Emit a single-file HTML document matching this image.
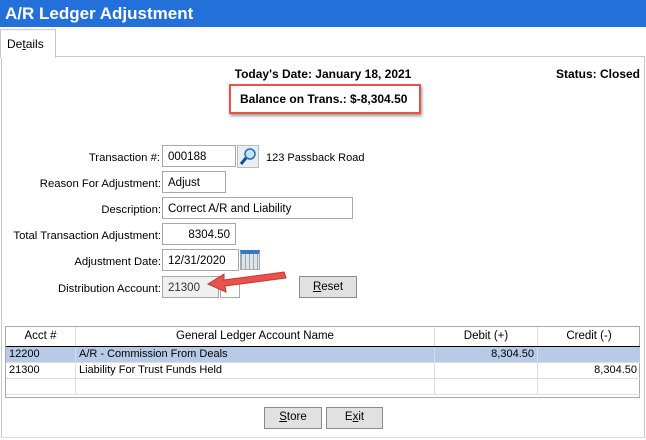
<html><head><style>
body{margin:0;width:646px;height:440px;background:#fff;font-family:"Liberation Sans",Arial,sans-serif;font-size:11px;color:#000;position:relative;overflow:hidden}
.a{position:absolute}
.in{position:absolute;border:1px solid #a8a8a8;background:#fff;box-sizing:border-box;padding:4px 5px;font-size:11.5px;height:22px;line-height:14px}
.lb{position:absolute;text-align:right;right:485px;font-size:11.3px}
.btn{position:absolute;border:1px solid #8a8a8a;background:#e1e1e1;box-sizing:border-box;text-align:center;font-size:11.5px;line-height:19px}
td{font-size:11px;padding:0 3px;height:16px;border-right:1px solid #ddd;border-bottom:1px solid #ddd}
</style></head><body>
<div class="a" style="left:0;top:0;width:646px;height:27px;background:#2370db"></div>
<div class="a" style="left:5px;top:4px;color:#fff;font-weight:bold;font-size:17px">A/R Ledger Adjustment</div>
<div class="a" style="left:1px;top:56px;width:642px;height:380px;border:1px solid #c8c8c8;border-bottom-color:#ddd"></div>
<div class="a" style="left:0;top:29px;width:54px;height:28px;border:1px solid #c8c8c8;border-bottom:none;background:#fff"></div>
<div class="a" style="left:7px;top:37px;font-size:12px">De<u>t</u>ails</div>
<div class="a" style="left:0;top:67px;width:646px;text-align:center;font-weight:bold;font-size:12px">Today's Date: January 18, 2021</div>
<div class="a" style="right:6px;top:67px;font-weight:bold;font-size:12px">Status: Closed</div>
<div class="a" style="left:229px;top:84px;width:188px;height:26px;border:2px solid #e8524a;box-shadow:1px 2px 3px rgba(0,0,0,.4)"></div>
<div class="a" style="left:240px;top:92px;font-weight:bold;font-size:12px">Balance on Trans.: $-8,304.50</div>
<div class="lb" style="top:152px;right:486px">Transaction #:</div>
<div class="in" style="left:162px;top:145px;width:74px">000188</div>
<div class="a" style="left:237px;top:145px;width:20px;height:21px;border:1px solid #bbb;background:#e8eef5"><svg width="20" height="21"><circle cx="12" cy="8" r="5" fill="#bfe4f8" stroke="#2a6ab5" stroke-width="1.5"/><line x1="8" y1="12" x2="3" y2="18" stroke="#1a4a90" stroke-width="3"/></svg></div>
<div class="a" style="left:266px;top:152px">123 Passback Road</div>
<div class="lb" style="top:178px">Reason For Adjustment:</div>
<div class="in" style="left:162px;top:171px;width:64px">Adjust</div>
<div class="lb" style="top:204px">Description:</div>
<div class="in" style="left:162px;top:197px;width:191px">Correct A/R and Liability</div>
<div class="lb" style="top:230px">Total Transaction Adjustment:</div>
<div class="in" style="left:162px;top:223px;width:74px;text-align:right">8304.50</div>
<div class="lb" style="top:256px">Adjustment Date:</div>
<div class="in" style="left:162px;top:249px;width:77px">12/31/2020</div>
<div class="a" style="left:240px;top:250px;width:20px;height:20px;background:repeating-linear-gradient(90deg,#9ab 0 1px,#dde4ea 1px 4px);border:1px solid #aaa;border-top:4px solid #3c78c0;box-sizing:border-box"></div>
<div class="lb" style="top:283px">Distribution Account:</div>
<div class="in" style="left:162px;top:276px;width:57px;background:#f0f0f0;color:#333">21300</div>
<div class="a" style="left:220px;top:280px;width:18px;height:16px;border:1px solid #aaa;background:#fff"></div>
<svg class="a" style="left:200px;top:264px" width="95" height="30"><path d="M8 20 L24 10 L24 16 L84 8 L86 14 L25 22 L26 28 Z" fill="#e8524a" stroke="#c03a33" stroke-width="1"/></svg>
<div class="btn" style="left:299px;top:276px;width:58px;height:22px;line-height:20px"><u>R</u>eset</div>
<div class="a" style="left:5px;top:326px;width:635px;height:72px;border:1px solid #aaa;box-sizing:border-box"></div>
<table class="a" style="left:6px;top:327px;width:634px;border-collapse:collapse">
<tr style="height:19px"><td style="width:63px;text-align:center;border-bottom:1px solid #000;font-size:11.5px">Acct #</td><td style="width:352px;text-align:center;border-bottom:1px solid #000;font-size:11.5px">General Ledger Account Name</td><td style="width:96px;text-align:center;border-bottom:1px solid #000;font-size:11.5px">Debit (+)</td><td style="text-align:center;border-bottom:1px solid #000;border-right:none;font-size:11.5px">Credit (-)</td></tr>
<tr style="background:#b7cbe8"><td>12200</td><td>A/R - Commission From Deals</td><td style="text-align:right">8,304.50</td><td style="border-right:none"></td></tr>
<tr><td>21300</td><td>Liability For Trust Funds Held</td><td></td><td style="text-align:right;border-right:none">8,304.50</td></tr>
<tr><td></td><td></td><td></td><td style="border-right:none"></td></tr>
</table>
<div class="btn" style="left:264px;top:407px;width:58px;height:22px"><u>S</u>tore</div>
<div class="btn" style="left:326px;top:407px;width:57px;height:22px">E<u>x</u>it</div>
</body></html>
